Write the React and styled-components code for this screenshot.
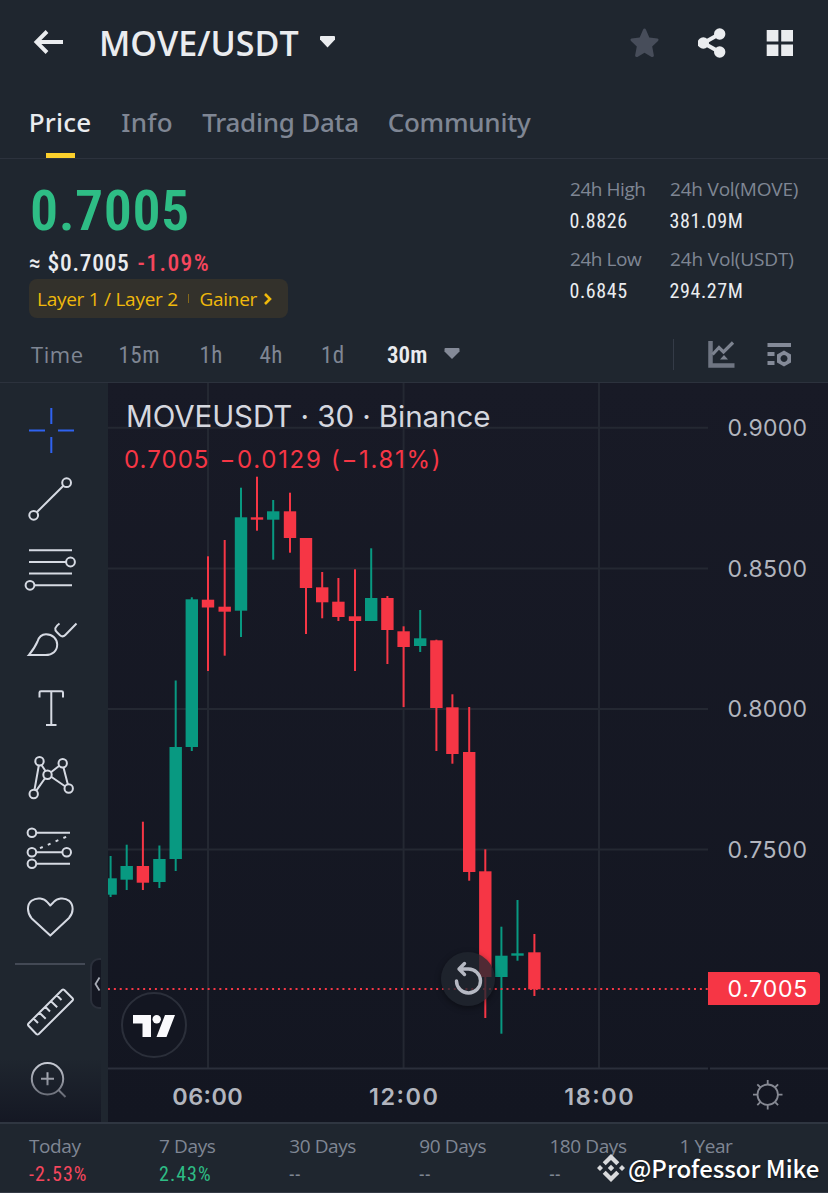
import React from 'react';
import styled, { createGlobalStyle, css } from 'styled-components';

const c = {
  bg: '#1f262f',
  line: '#2c323d',
  text: '#eaecef',
  muted: '#7f8694',
  green: '#2ebd85',
  red: '#f6465d',
  up: '#089981',
  down: '#f63645',
  yellow: '#f0b90b',
};

const GlobalStyle = createGlobalStyle`
  * { box-sizing: border-box; }
  body { margin: 0; background: ${c.bg}; }
`;

const labelFont = css`font-family: "Open Sans", "Noto Sans", sans-serif;`;
const numberFont = css`font-family: Roboto, sans-serif;`;

const Screen = styled.div`
  width: 828px;
  height: 1193px;
  display: flex;
  flex-direction: column;
  overflow: hidden;
  background: ${c.bg};
  color: ${c.text};
  ${labelFont}
`;

/* ---------- header ---------- */
const Header = styled.header`
  height: 84px;
  flex: none;
  display: flex;
  align-items: center;
  padding: 0 34px 0 33px;
`;
const Pair = styled.h1`
  margin: 2px 0 0 35px;
  font-size: 34px;
  line-height: 46px;
  font-weight: 600;
`;
const Caret = styled.svg`
  flex: none;
  margin-left: ${(p) => p.$gap}px;
  fill: ${(p) => p.$color};
`;
const HeaderActions = styled.div`
  margin: 1px 0 0 auto;
  display: flex;
  align-items: center;
  gap: 39px;
`;
const Icon = styled.svg`
  display: block;
  flex: none;
`;

/* ---------- tabs ---------- */
const Tabs = styled.nav`
  height: 75px;
  flex: none;
  display: flex;
  gap: 30px;
  padding-left: 29px;
  border-bottom: 1px solid ${c.line};
`;
const Tab = styled.div`
  display: flex;
  flex-direction: column;
  align-items: center;
  justify-content: space-between;
  width: ${(p) => p.$width}px;
  padding-top: 20px;
  font: 500 26px/36px "Noto Sans", sans-serif;
  white-space: nowrap;
  letter-spacing: ${(p) => p.$track}px;
  color: ${(p) => (p.$active ? c.text : c.muted)};
`;
const TabMark = styled.i`
  width: 29px;
  height: 5px;
  background: #fcd02c;
`;

/* ---------- summary ---------- */
const Summary = styled.section`
  height: 167px;
  flex: none;
  display: flex;
  justify-content: space-between;
  padding: 0 29px;
`;
const PriceColumn = styled.div`
  display: flex;
  flex-direction: column;
  align-items: flex-start;
`;
const LastPrice = styled.div`
  ${numberFont}
  margin: 21px 0 0 1px;
  font-size: 56px;
  line-height: 62px;
  font-weight: 600;
  font-stretch: 78%;
  letter-spacing: 0.5px;
  color: ${c.green};
`;
const FiatRow = styled.div`
  ${numberFont}
  display: flex;
  gap: 8px;
  margin-top: 6px;
  font-size: 23.5px;
  line-height: 30px;
  font-weight: 500;
  font-stretch: 86%;
  letter-spacing: 0.7px;
`;
const Change = styled.span`
  color: ${c.red};
  letter-spacing: 1.45px;
`;
const TagPill = styled.div`
  display: flex;
  align-items: center;
  height: 39px;
  width: 259px;
  margin-top: 1px;
  padding-left: 8px;
  border-radius: 8px;
  background: #33312b;
  color: ${c.yellow};
  font-size: 19px;
  letter-spacing: -0.26px;
  white-space: pre;
`;
const TagDivider = styled.i`
  flex: none;
  width: 1px;
  height: 9px;
  margin: 0 10.5px 0 10px;
  background: #86691a;
`;
const Stats = styled.dl`
  display: grid;
  grid-template-columns: 100px 129px;
  grid-auto-rows: 70px;
  margin: 15px 0 0;
`;
const StatLabel = styled.dt`
  font-size: 19px;
  line-height: 30px;
  letter-spacing: ${(p) => p.$track}px;
  white-space: nowrap;
  color: ${c.muted};
`;
const StatValue = styled.dd`
  ${numberFont}
  margin: 2px 0 0 -0.5px;
  font-size: 20px;
  line-height: 30px;
  font-stretch: 86%;
  letter-spacing: 0.6px;
`;

/* ---------- intervals ---------- */
const Intervals = styled.div`
  height: 57px;
  flex: none;
  display: flex;
  align-items: center;
  padding: 0 36px 0 31px;
  border-bottom: 1px solid ${c.line};
`;
const IntervalLabel = styled.span`
  width: 87.5px;
  font-size: 22px;
  line-height: 30px;
  letter-spacing: 0.6px;
  color: ${c.muted};
`;
const Interval = styled.span`
  ${numberFont}
  width: ${(p) => p.$width}px;
  padding-top: 4px;
  font-size: 23px;
  line-height: 30px;
  font-weight: ${(p) => (p.$active ? 600 : 400)};
  font-stretch: 86%;
  letter-spacing: ${(p) => (p.$active ? 0 : 0.5)}px;
  color: ${(p) => (p.$active ? c.text : c.muted)};
`;
const IntervalActions = styled.div`
  margin-left: auto;
  display: flex;
  align-items: center;
  gap: 32px;
  padding-left: 34px;
  height: 31px;
  border-left: 1px solid #343b47;
`;

/* ---------- chart ---------- */
const ChartArea = styled.main`
  height: 739px;
  flex: none;
  display: flex;
`;
const Sidebar = styled.aside`
  position: relative;
  width: 101px;
  margin-right: 7px;
  padding-top: 12px;
  overflow: hidden;
  display: flex;
  flex-direction: column;
  &::after {
    content: "";
    position: absolute;
    inset: auto 0 0 0;
    height: 64px;
    background: linear-gradient(rgba(20, 23, 35, 0), rgba(20, 23, 35, 0.95));
  }
`;
const Tool = styled.svg`
  display: block;
  flex: none;
  fill: none;
  stroke: ${(p) => p.$stroke || '#d6dae3'};
  stroke-width: 2;
`;
const ToolDivider = styled.hr`
  width: 70px;
  height: 2px;
  flex: none;
  margin: 8px 0 10px 15px;
  border: 0;
  background: #434955;
`;
const CollapseHandle = styled.button`
  position: absolute;
  left: 90px;
  top: 575px;
  width: 20px;
  height: 51px;
  padding: 0;
  border: 2px solid #2b303b;
  border-radius: 9px;
  background: #141722;
`;
const ChartPane = styled.div`
  position: relative;
  width: 720px;
  background: linear-gradient(#181a26, #131621);
`;
const ChartLegend = styled.div`
  position: absolute;
  left: 17px;
  top: 14px;
  font-family: Inter, sans-serif;
  white-space: pre;
`;
const Symbol = styled.div`
  margin-left: 1px;
  font-size: 29.6px;
  line-height: 38px;
  letter-spacing: -0.1px;
  color: #d5d7df;
`;
const SymbolChange = styled.div`
  display: flex;
  gap: 10px;
  margin: 8px 0 0 -1px;
  font-size: 24px;
  line-height: 34px;
  letter-spacing: 1.05px;
  color: ${c.down};
`;
const SymbolDelta = styled.span`
  letter-spacing: 1.7px;
`;
const PriceTag = styled.div`
  position: absolute;
  left: 600px;
  top: 589px;
  width: 112px;
  height: 33px;
  padding: 1px 0 0 19.5px;
  border-radius: 0 4px 4px 0;
  background: ${c.down};
  color: #fff;
  font: 400 23px/33px Inter, sans-serif;
  letter-spacing: 0.75px;
`;
const Provider = styled.div`
  position: absolute;
  left: 13px;
  top: 609px;
  width: 66px;
  height: 66px;
  padding-top: 2px;
  display: grid;
  place-items: center;
  border: 2px solid #2b2f3a;
  border-radius: 50%;
  background: #131621;
`;
const ResetButton = styled.button`
  position: absolute;
  left: 333px;
  top: 569px;
  width: 54px;
  height: 54px;
  padding: 0;
  border: 0;
  border-radius: 50%;
  background: rgba(33, 38, 48, 0.78);
  box-shadow: 0 2px 6px rgba(0, 0, 0, 0.4);
`;

/* ---------- performance footer ---------- */
const Performance = styled.footer`
  position: relative;
  flex: 1;
  display: grid;
  grid-template-columns: repeat(6, 130.1px);
  padding: 7px 0 0 29px;
  border-top: 2px solid #2f3641;
  border-bottom: 1px solid #343a45;
`;
const Period = styled.div`
  font-size: 19px;
  line-height: 30px;
  letter-spacing: -0.4px;
  color: ${c.muted};
`;
const PeriodValue = styled.div`
  ${numberFont}
  margin-top: 1px;
  font-size: 20px;
  line-height: 24px;
  font-stretch: 86%;
  letter-spacing: 1px;
  color: ${(p) => p.$color};
`;
const Watermark = styled.div`
  position: absolute;
  left: 597px;
  top: 26px;
  display: flex;
  align-items: center;
  gap: 3px;
  font: 500 24px/36px "Noto Sans CJK SC", sans-serif;
  color: #fff;
  white-space: nowrap;
  text-shadow: 0 1px 2px rgba(0, 0, 0, 0.5);
`;

const TABS = [
  ['Price', 62, true, 0.2],
  ['Info', 52, false, 0.2],
  ['Trading Data', 155, false, -0.25],
  ['Community', 142, false, -0.25],
];

const STATS = [
  ['24h High', '0.8826', -0.45],
  ['24h Vol(MOVE)', '381.09M', -0.2],
  ['24h Low', '0.6845', -0.45],
  ['24h Vol(USDT)', '294.27M', -0.15],
];

const PERIODS = [
  ['Today', '-2.53%', c.red],
  ['7 Days', '2.43%', c.green],
  ['30 Days', '--', c.muted],
  ['90 Days', '--', c.muted],
  ['180 Days', '--', c.muted],
  ['1 Year', '--', c.muted],
];

// [centre x, high, low, body top, body bottom, rising]
const CANDLES = [
  [110.6, 856, 897, 878.3, 894.7, 1],
  [126.7, 844.7, 890, 866, 879.7, 1],
  [142.9, 821.7, 890, 866, 882.7, 0],
  [159.4, 845.5, 888, 859, 882, 1],
  [175.7, 680.5, 871, 747, 859, 1],
  [191.8, 597.3, 751, 599.3, 747, 1],
  [208, 556.3, 671, 599.7, 607.5, 0],
  [224.7, 540, 655.7, 606.7, 611.7, 0],
  [241, 487.7, 637, 517.3, 610.7, 1],
  [257, 476.7, 530.7, 517.3, 519.7, 0],
  [273.2, 500, 559.7, 511.3, 519.7, 1],
  [290, 492.7, 552.7, 511.3, 538, 0],
  [306, 538, 634, 538, 588, 0],
  [322.2, 572, 618.3, 587.3, 602.3, 0],
  [338.4, 578, 621, 601.7, 617, 0],
  [355, 569.3, 671, 616.3, 621, 0],
  [371.2, 548.3, 621, 598, 621, 1],
  [387.4, 596, 664, 598, 630, 0],
  [403.6, 626.3, 707, 631.3, 647, 0],
  [420.2, 610, 652, 638.3, 646, 1],
  [436.4, 639.7, 751, 640.3, 708, 0],
  [452.4, 694.3, 763.7, 707.3, 754, 0],
  [469.2, 707, 880.7, 752, 872, 0],
  [485.3, 849.3, 1018, 871.3, 977, 0],
  [501.4, 926.7, 1033.7, 955.7, 977, 1],
  [517.5, 900, 960.7, 953.3, 955.7, 1],
  [534.4, 934, 996, 952.3, 989.3, 0],
];

const PRICES = [['0.9000', 427.7], ['0.8500', 568.4], ['0.8000', 709], ['0.7500', 849.6]];
// [label, gridline x, text start, text length]
const TIMES = [['06:00', 208, 172.3, 70.5], ['12:00', 403.6, 369, 69], ['18:00', 599, 564.3, 69.5]];

function Chart() {
  return (
    <Icon width="720" height="739" viewBox="108 383 720 739">
      <g stroke="#242832" strokeWidth="2">
        {PRICES.map(([p, y]) => <path key={p} d={`M108 ${y}H708`} />)}
        {TIMES.map(([t, x]) => <path key={t} d={`M${x} 383V1068`} />)}
      </g>
      <path d="M108 1068.500H708M710 1068.500H828" stroke="#2b2f3b" strokeWidth="2" />
      {CANDLES.map(([x, hi, lo, top, bottom, up]) => (
        <g key={x} fill={up ? c.up : c.down}>
          <rect x={x - 1} y={hi} width="2" height={lo - hi} />
          <rect x={x - 6.2} y={top} width="12.400" height={bottom - top} />
        </g>
      ))}
      <path d="M108 989H708" stroke={c.down} strokeWidth="2" strokeDasharray="2 3.860" />
      <g fontFamily="Inter, sans-serif" fontSize="23" fill="#b2b5be">
        {PRICES.map(([p, y]) => (
          <text key={p} x="727.500" y={y + 8.4} textLength="79.500">{p}</text>
        ))}
        <g fontWeight="600" fontSize="23.400">
          {TIMES.map(([t, , start, length]) => (
            <text key={t} x={start} y="1105" textLength={length}>{t}</text>
          ))}
        </g>
      </g>
      <g fill="none" stroke="#868993" strokeWidth="1.800">
        <circle cx="767.700" cy="1094.700" r="10.200" />
        <path d="M767.700 1080v4.500M767.700 1105v4.500M753 1094.700h4.500M778 1094.700h4.500M757.300 1084.300l3.200 3.200M774.900 1101.900l3.200 3.200M757.300 1105.100l3.200-3.200M774.900 1087.500l3.200-3.200" />
      </g>
    </Icon>
  );
}

function Tools() {
  const box = (y) => ({ width: 101, height: 70, viewBox: `0 ${y} 101 70` });
  return (
    <Sidebar>
      <Tool {...box(395)} $stroke="#2f62f0">
        <path d="M51.300 408v16M51.300 437v16M29 430.400h16M58 430.400h16" />
      </Tool>
      <Tool {...box(465)}>
        <circle cx="33.700" cy="515.300" r="4.400" />
        <circle cx="66.600" cy="482.700" r="4.400" />
        <path d="M37 512l26.400-26.200" />
      </Tool>
      <Tool {...box(535)}>
        <path d="M29 550.300h43M29 562h37M29 573.600h43M35 585.300h37" />
        <circle cx="70.500" cy="562" r="4.400" />
        <circle cx="30" cy="585.300" r="4.400" />
      </Tool>
      <Tool {...box(605)}>
        <path d="M28.800 655.100C33 650 36 645 37.500 641.500C39 636.500 42 634.200 46 634.200C52.500 634.200 57.200 638.800 57.200 644.500C57.200 651 52.500 655.100 45.500 655.100Z" />
        <path d="M59.500 623.500C54.500 627 54 629.500 57.200 632.500L60 635.200C62 637 63.500 636.800 65.300 635L76.500 623.500" />
      </Tool>
      <Tool {...box(675)}>
        <path d="M39.500 697.500V692.500Q39.500 691.300 41 691.300H61.500Q63 691.300 63 692.500V697.500M51.300 691.300V725M46 725H56.500" />
      </Tool>
      <Tool {...box(745)}>
        <circle cx="39.500" cy="761.300" r="4.200" />
        <circle cx="62.700" cy="763.300" r="4.200" />
        <circle cx="47.500" cy="774.700" r="4.200" />
        <circle cx="33.700" cy="794" r="4.200" />
        <circle cx="68.700" cy="788.500" r="4.200" />
        <path d="M38.800 765.500L34.500 789.800M41.500 765L45.500 771M59.300 765.800L51 772.200M63.500 767.500L67.800 784.300M51.200 776.800L65 786.300M45 778.200L36.300 790.600" />
      </Tool>
      <Tool {...box(815)}>
        <circle cx="31.900" cy="832.800" r="4.300" />
        <circle cx="31.900" cy="852.200" r="4.300" />
        <circle cx="31.900" cy="863.700" r="4.300" />
        <circle cx="66.700" cy="852.200" r="4.300" />
        <path d="M36.500 832.800H70M36.500 852.200H62M36.500 863.700H70" />
        <path d="M40 848.200L67.500 836.200" strokeDasharray="3 5.500" />
      </Tool>
      <Tool {...box(885)}>
        <path d="M50.300 935.600L31.500 918.200C26.800 912.500 26.800 904.500 31.500 900.700C37 896.800 44 898.200 47.300 902.200L50.300 905.500L53.500 902.200C57 898.200 64 896.800 69.300 900.900C73.800 905 73.800 912.500 69 918Z" strokeLinejoin="round" />
      </Tool>
      <ToolDivider />
      <Tool {...box(975)}>
        <path d="M28.500 1023.500L62 990Q63 989 64.300 990L72.500 998.200Q73.500 999.300 72.500 1000.500L38.800 1034Q37.500 1035 36.300 1034L28.500 1025.800Q27.500 1024.600 28.500 1023.500ZM33.500 1018.500l4.500 4.500M39.500 1012.800l6.200 6M45.500 1007l4.500 4.500M51 1001.200l6.200 6M57 995.500l4.500 4.500" />
      </Tool>
      <Tool {...box(1045)}>
        <circle cx="47.500" cy="1078.800" r="15.700" />
        <path d="M58.500 1090L65.500 1097M47.500 1072.300v13M41 1078.800h13" />
      </Tool>
      <CollapseHandle aria-label="Collapse">
        <Icon width="10" height="18" viewBox="0 0 10 18" fill="none" stroke="#a9adb7" strokeWidth="1.800">
          <path d="M7.500 2.500L3.500 9l4 6.500" />
        </Icon>
      </CollapseHandle>
    </Sidebar>
  );
}

export default function App() {
  return (
    <Screen>
      <GlobalStyle />
      <Header>
        <Icon width="31" height="26" viewBox="33 29 31 26" fill="none" stroke={c.text} strokeWidth="3.900">
          <path d="M63 42H37M47 31.500L36.500 42L47 52.500" />
        </Icon>
        <Pair>MOVE/USDT</Pair>
        <Caret $gap={21} $color={c.text} width="15" height="12" viewBox="0 0 15 12">
          <path d="M0 1Q0 0 1 0H14Q15 0 15 1V3.500L7.500 11.500L0 3.500Z" />
        </Caret>
        <HeaderActions>
          <Icon width="29" height="30" viewBox="0 0 29 30" fill="#474d5a">
            <path d="M14.500 0.500Q15.500 0.500 16 1.800L19.300 9.600L27.500 10.400Q29.300 11.300 28 12.900L22.200 18.400L23.900 27.500Q23.500 29.700 21.600 28.900L14.500 24.700L7.400 28.900Q5.500 29.700 5.100 27.500L6.800 18.400L1 12.900Q-0.300 11.300 1.500 10.400L9.700 9.600L13 1.800Q13.500 0.500 14.500 0.500Z" />
          </Icon>
          <Icon width="29" height="30" viewBox="0.500 0 29 30" fill={c.text}>
            <circle cx="5.800" cy="15" r="5.700" />
            <circle cx="22.200" cy="6" r="5.700" />
            <circle cx="22.200" cy="24" r="5.700" />
            <path d="M22 6L6 15L22 24" fill="none" stroke={c.text} strokeWidth="4" />
          </Icon>
          <Icon width="28" height="28" viewBox="0 0 28 28" fill={c.text}>
            <path d="M0.700 1h11.700v11.500H0.700zM15.200 1H27v11.500H15.200zM0.700 15.500h11.700V27H0.700zM15.200 15.500H27V27H15.200z" />
          </Icon>
        </HeaderActions>
      </Header>

      <Tabs>
        {TABS.map(([label, width, active, track]) => (
          <Tab key={label} $width={width} $active={active} $track={track}>
            {label}
            {active && <TabMark />}
          </Tab>
        ))}
      </Tabs>

      <Summary>
        <PriceColumn>
          <LastPrice>0.7005</LastPrice>
          <FiatRow>
            <span>≈ $0.7005</span>
            <Change>-1.09%</Change>
          </FiatRow>
          <TagPill>
            Layer 1 / Layer 2
            <TagDivider />
            Gainer
            <Caret $gap={6} $color="none" width="9" height="12" viewBox="0 0 9 12">
              <path d="M2 1L7 6L2 11" fill="none" stroke={c.yellow} strokeWidth="2.600" />
            </Caret>
          </TagPill>
        </PriceColumn>
        <Stats>
          {STATS.map(([label, value, track]) => (
            <div key={label}>
              <StatLabel $track={track}>{label}</StatLabel>
              <StatValue>{value}</StatValue>
            </div>
          ))}
        </Stats>
      </Summary>

      <Intervals>
        <IntervalLabel>Time</IntervalLabel>
        <Interval $width={81}>15m</Interval>
        <Interval $width={60}>1h</Interval>
        <Interval $width={61.5}>4h</Interval>
        <Interval $width={66}>1d</Interval>
        <Interval $width={45} $active>30m</Interval>
        <Caret $gap={12} $color="#848a98" width="16" height="12" viewBox="0 0 15 12">
          <path d="M0 1Q0 0 1 0H14Q15 0 15 1V3.500L7.500 11L0 3.500Z" />
        </Caret>
        <IntervalActions>
          <Icon width="27" height="27" viewBox="0 0 27 27">
            <path d="M2.500 0V24.500H26.500" fill="none" stroke="#6f7582" strokeWidth="4.500" />
            <path d="M4.500 13.500L11 6.500L15.500 11L25 1.500" fill="none" stroke="#7d8390" strokeWidth="3.200" />
            <path d="M12 18.500L16 14L20 18.500Z" fill="#7d8390" />
          </Icon>
          <Icon width="25" height="27" viewBox="0 0 25 27" fill="#848a98">
            <path d="M0.500 2H24v4H0.500zM0.500 11H7.500v4H0.500zM0.500 20H7.500v4H0.500z" />
            <path fillRule="evenodd" d="M17 9.500L24 13.500V21.500L17 25.500L10 21.500V13.500ZM17 14a3.500 3.500 0 1 0 0.010 0Z" />
          </Icon>
        </IntervalActions>
      </Intervals>

      <ChartArea>
        <Tools />
        <ChartPane>
          <Chart />
          <ChartLegend>
            <Symbol>MOVEUSDT · 30 · Binance</Symbol>
            <SymbolChange>
              <span>0.7005</span>
              <SymbolDelta>−0.0129 (−1.81%)</SymbolDelta>
            </SymbolChange>
          </ChartLegend>
          <PriceTag>0.7005</PriceTag>
          <Provider>
            <Icon width="42" height="22" viewBox="0 0 42 22" fill="#fafafd">
              <path d="M0 0H18V22H9.500V8.500H0zM32 0H42L33.500 22H23.500z" />
              <circle cx="23.700" cy="4.200" r="4.200" />
            </Icon>
          </Provider>
          <ResetButton aria-label="Reset">
            <Icon width="54" height="54" viewBox="441 952 54 54" fill="none" stroke="#b6b9c3" strokeWidth="3.400" strokeLinecap="round" strokeLinejoin="round">
              <path d="M456.500 981A12 12 0 1 0 468 969H459M464.500 963.500L459 969L464.500 974.500" />
            </Icon>
          </ResetButton>
        </ChartPane>
      </ChartArea>

      <Performance>
        {PERIODS.map(([label, value, color]) => (
          <div key={label}>
            <Period>{label}</Period>
            <PeriodValue $color={color}>{value}</PeriodValue>
          </div>
        ))}
        <Watermark>
          <Icon width="28" height="28" viewBox="0 0 28 28" fill="#d9dadc">
            <path d="M14 0L22.300 8.300L19.300 11.300L14 6L8.700 11.300L5.700 8.300ZM14 28L5.700 19.700L8.700 16.700L14 22L19.300 16.700L22.300 19.700ZM3 11L6 14L3 17L0 14ZM25 11L28 14L25 17L22 14ZM14 10.800L17.200 14L14 17.200L10.800 14Z" />
          </Icon>
          @Professor Mike
        </Watermark>
      </Performance>
    </Screen>
  );
}
